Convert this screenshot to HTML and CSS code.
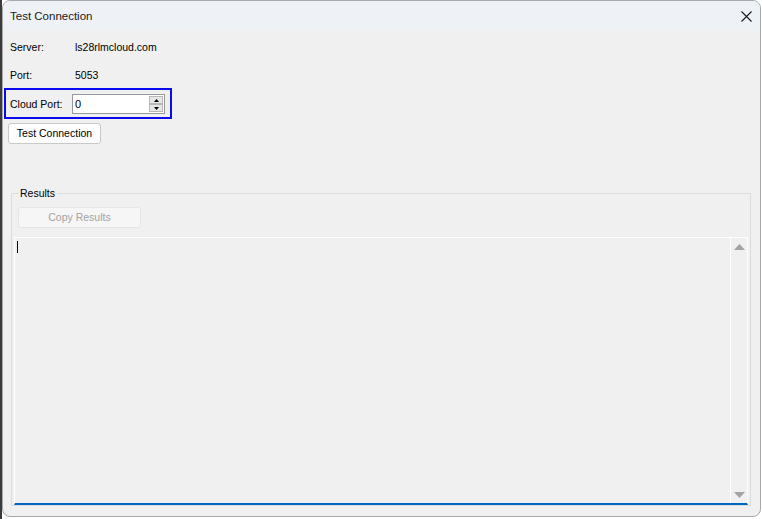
FILE: index.html
```html
<!DOCTYPE html>
<html>
<head>
<meta charset="utf-8">
<title>Test Connection</title>
<link rel="stylesheet" href="styles.css">
</head>
<body>
<div class="window">
  <div class="titlebar">
    <span class="title">Test Connection</span>
    <svg class="close" width="11" height="11" viewBox="0 0 11 11"><path d="M0.5 0.5 L10.5 10.5 M10.5 0.5 L0.5 10.5" stroke="#1a1a1a" stroke-width="1.1" fill="none"/></svg>
  </div>
  <div class="content">
    <div class="row first"><span class="lbl">Server:</span><span>ls28rlmcloud.com</span></div>
    <div class="row second"><span class="lbl">Port:</span><span>5053</span></div>
    <div class="cloudbox">
      <span class="lbl2">Cloud Port:</span>
      <div class="numeric">
        <span class="val">0</span>
        <div class="spin">
          <div class="sbtn"><svg width="5" height="3" viewBox="0 0 5 3"><path d="M2.5 0 L5 3 L0 3 Z" fill="#000"/></svg></div>
          <div class="sbtn"><svg width="5" height="3" viewBox="0 0 5 3"><path d="M0 0 L5 0 L2.5 3 Z" fill="#000"/></svg></div>
        </div>
      </div>
    </div>
    <div class="btn testbtn">Test Connection</div>
    <fieldset class="group">
      <legend>Results</legend>
      <div class="btn copybtn">Copy Results</div>
      <div class="textbox">
        <div class="textarea"><span class="caret"></span></div>
        <div class="scroll">
          <svg width="11" height="7" viewBox="0 0 11 7"><path d="M5.5 0 L11 6 L0 6 Z" fill="#a3a3a3"/></svg>
          <svg width="11" height="7" viewBox="0 0 11 7"><path d="M0 1 L11 1 L5.5 7 Z" fill="#a3a3a3"/></svg>
        </div>
      </div>
    </fieldset>
  </div>
</div>
</body>
</html>
```
FILE: styles.css
```css
html, body {
  margin: 0;
  padding: 0;
}
body {
  width: 762px;
  height: 519px;
  background: linear-gradient(to right, #3b3b3b 2px, #ffffff 2px);
  font-family: "Liberation Sans", Arial, sans-serif;
  font-size: 10.5px;
  color: #000;
  overflow: hidden;
}
.window {
  margin-left: 2px;
  width: 759px;
  height: 517px;
  box-sizing: border-box;
  border: 1px solid #a9a9a9;
  border-radius: 8px;
  background: #f0f0f0;
  overflow: hidden;
  display: flex;
  flex-direction: column;
}
.titlebar {
  height: 29px;
  flex: none;
  background: #eef2f7;
  display: flex;
  align-items: center;
  padding-left: 7px;
  padding-right: 8px;
}
.title {
  font-size: 11.5px;
  color: #1a1a1a;
  flex: 1;
  padding-top: 1px;
}
.close {
  margin-top: 1px;
}
.content {
  flex: 1;
  display: flex;
  flex-direction: column;
  align-items: flex-start;
}
.row {
  height: 14px;
  line-height: 14px;
  display: flex;
  padding-left: 7px;
}
.row.first { margin-top: 10px; }
.row.second { margin-top: 14px; }
.lbl {
  width: 65px;
}
.cloudbox {
  margin-top: 6px;
  margin-left: 1px;
  width: 168px;
  height: 31px;
  box-sizing: border-box;
  border: 2px solid #0a0af0;
  display: flex;
  align-items: center;
  padding-left: 4px;
}
.lbl2 {
  width: 62px;
  margin-top: 1px;
}
.numeric {
  width: 93px;
  height: 20px;
  box-sizing: border-box;
  border: 1px solid #9a9a9a;
  background: #fff;
  display: flex;
  align-items: center;
  padding-left: 2px;
  margin-top: 1px;
}
.val {
  flex: 1;
  font-size: 11px;
}
.spin {
  width: 14px;
  height: 16px;
  display: flex;
  flex-direction: column;
  gap: 0;
  margin-right: 1px;
}
.sbtn {
  flex: 1;
  box-sizing: border-box;
  border: 1px solid #b8b8b8;
  background: #e7e7e7;
  display: flex;
  align-items: center;
  justify-content: center;
}
.btn {
  box-sizing: border-box;
  height: 21px;
  line-height: 19px;
  text-align: center;
  border-radius: 3px;
}
.testbtn {
  margin-top: 4px;
  margin-left: 5px;
  width: 93px;
  border: 1px solid #c9c9c9;
  background: #fdfdfd;
}
.group {
  margin: 42px 0 0 8px;
  width: 740px;
  box-sizing: border-box;
  border: 1px solid #dcdcdc;
  padding: 0;
  min-width: 0;
}
.group legend {
  margin-left: 6px;
  padding: 0 2px;
  line-height: 14px;
  height: 14px;
  font-size: 10.5px;
}
.copybtn {
  margin-top: 7px;
  margin-left: 6px;
  width: 123px;
  border: 1px solid #e6e6e6;
  background: #f6f6f6;
  color: #a3a3a3;
}
.textbox {
  margin: 9px 0 0 2px;
  width: 734px;
  height: 268px;
  box-sizing: border-box;
  border-top: 1px solid #ffffff;
  border-left: 1px solid #ffffff;
  border-right: 1px solid #ffffff;
  border-bottom: 2px solid #0067c0;
  display: flex;
}
.textarea {
  flex: 1;
  padding: 3px 0 0 2px;
}
.caret {
  display: block;
  width: 1px;
  height: 12px;
  background: #000;
}
.scroll {
  width: 17px;
  box-sizing: border-box;
  border-left: 1px solid #ffffff;
  display: flex;
  flex-direction: column;
  justify-content: space-between;
  align-items: center;
  padding: 6px 0 5px;
}
```
